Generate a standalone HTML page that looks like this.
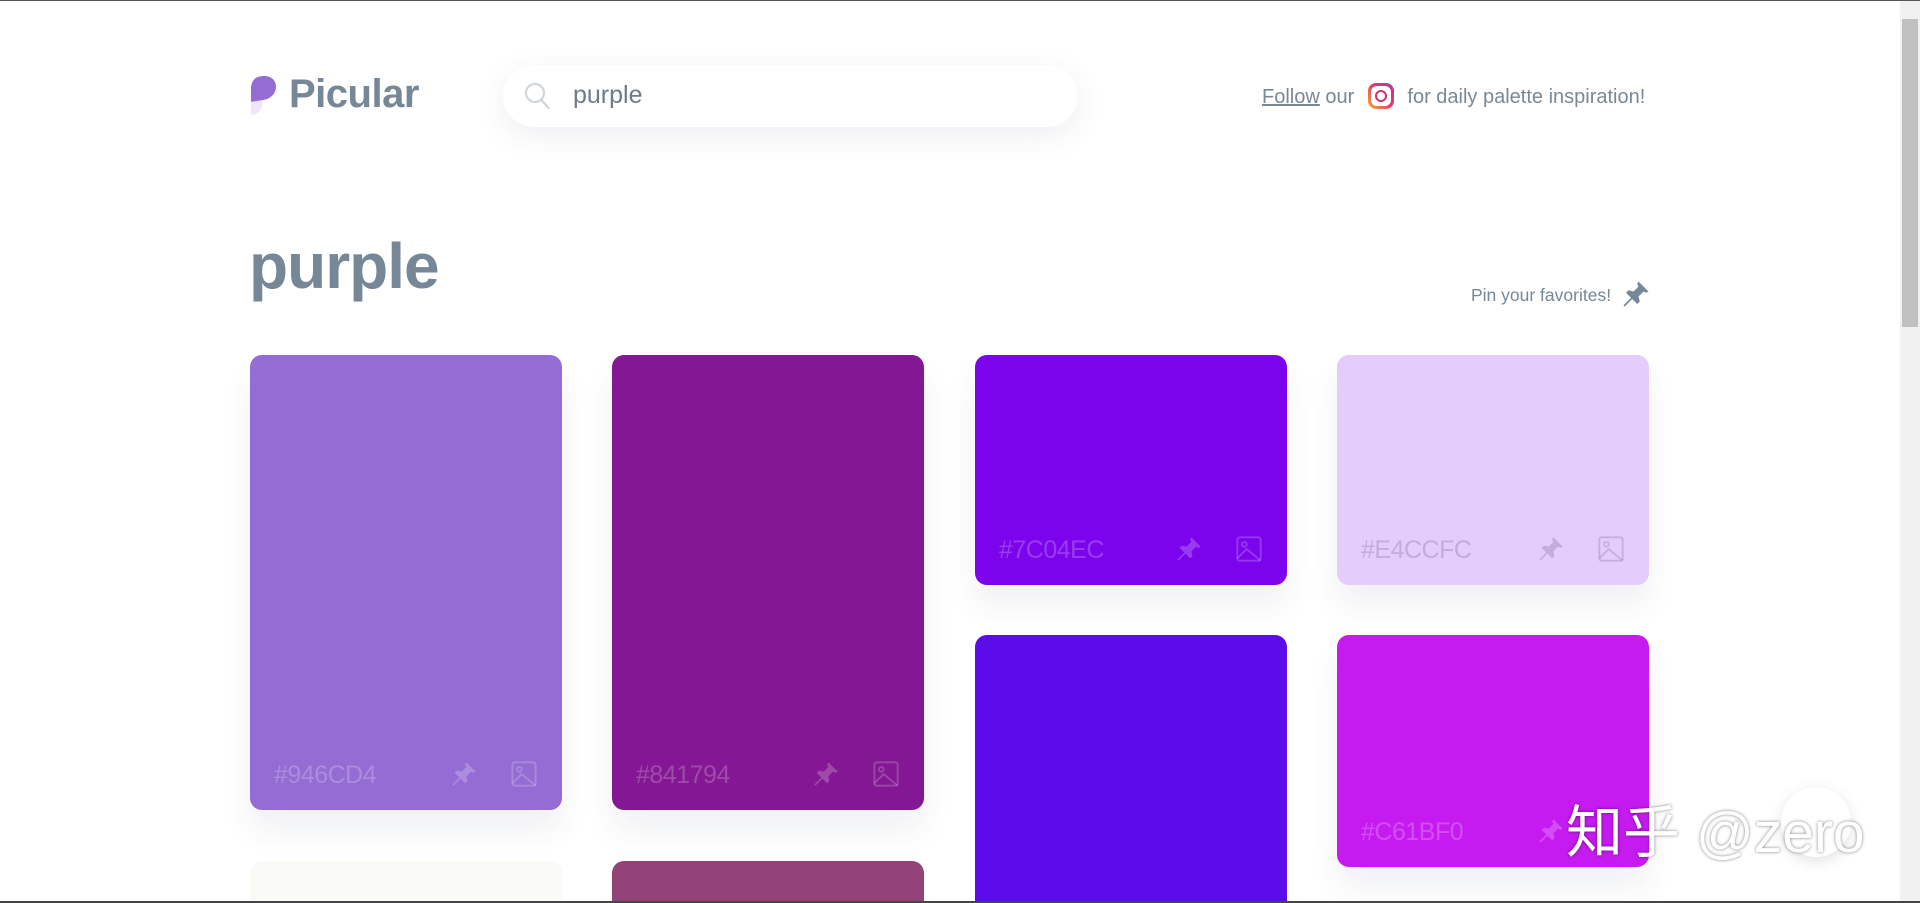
<!DOCTYPE html>
<html style="width:1920px;height:903px;overflow:hidden"><head><meta charset="utf-8"><style>
*{margin:0;padding:0;box-sizing:border-box}
body{width:1920px;height:903px;overflow:hidden;background:#fff;font-family:"Liberation Sans",sans-serif}
#w{position:relative;width:1920px;height:903px;overflow:hidden;border-top:1px solid #555;border-bottom:2px solid #444}
.abs{position:absolute}
.card{position:absolute;border-radius:12px;box-shadow:0 20px 30px rgba(40,50,80,.07)}
.cut{border-radius:12px 12px 0 0;box-shadow:none}
.hex{position:absolute;left:24px;bottom:20px;font-size:25px;color:rgba(255,255,255,.22);letter-spacing:-.5px}
.ic{position:absolute;bottom:22px;width:28px;height:28px}
</style></head><body><div id="w">
<svg class="abs" style="left:249px;top:74px" width="28" height="42" viewBox="0 0 28 42"><path d="M2 14C2 4 8 1 15 1c8 0 12 5 12 11s-5 12-13 13L2 27z" fill="#946CD4"/><path d="M2 27l12-2c0 8-4 15-12 15z" fill="#f0e6fa"/></svg>
<div class="abs" style="left:289px;top:71px;font-size:40px;font-weight:bold;color:#768797;letter-spacing:-.5px">Picular</div>
<div class="abs" style="left:503px;top:64px;width:575px;height:62px;border-radius:31px;background:#fff;box-shadow:0 8px 30px rgba(60,70,100,.09)"></div>
<svg class="abs" style="left:524px;top:81px" width="28" height="30" viewBox="0 0 28 30"><circle cx="11" cy="11" r="9" fill="none" stroke="#cfd4d8" stroke-width="2"/><path d="M17.5 18l7 8" stroke="#cfd4d8" stroke-width="2.2" stroke-linecap="round"/></svg>
<div class="abs" style="left:573px;top:80px;font-size:25px;color:#6d7c89">purple</div>
<div class="abs" style="left:1262px;top:82px;font-size:20px;color:#7a8894;white-space:nowrap"><span style="text-decoration:underline">Follow</span> our <span style="display:inline-block;width:26px;height:26px;vertical-align:-6px;margin:0 8px;border-radius:8px;background:linear-gradient(45deg,#f7b13a,#e4405f 50%,#b52fa8);position:relative"><span style="position:absolute;inset:3px;background:#fff;border-radius:6px"></span><span style="position:absolute;left:7px;top:7px;width:12px;height:12px;border:2.5px solid #d6316c;border-radius:50%"></span></span> for daily palette inspiration!</div>
<div class="abs" style="left:249px;top:228px;font-size:64px;font-weight:bold;color:#768797;letter-spacing:-1px">purple</div>
<div class="abs" style="left:1471px;top:284px;font-size:17.5px;color:#768797">Pin your favorites!</div>
<svg class="abs" style="left:1621px;top:278px" width="30" height="30" viewBox="0 0 24 24"><path d="M14 2l8 8-2 1-2-1-4 4 1 4-2 2-4-4-6 6-1-1 6-6-4-4 2-2 4 1 4-4-1-2z" fill="#768797"/></svg>

<div class="card" style="left:250px;top:354px;width:312px;height:455px;background:#946CD4"><div class="hex">#946CD4</div>
<svg class="ic" style="left:200px" viewBox="0 0 24 24"><path d="M14 2l8 8-2 1-2-1-4 4 1 4-2 2-4-4-6 6-1-1 6-6-4-4 2-2 4 1 4-4-1-2z" fill="rgba(255,255,255,.22)"/></svg>
<svg class="ic" style="left:260px" viewBox="0 0 24 24" fill="none" stroke="rgba(255,255,255,.2)" stroke-width="1.6"><rect x="2" y="2" width="20" height="20" rx="2"/><circle cx="8" cy="8" r="2"/><path d="M2 20l8-8 12 10"/></svg></div>
<div class="card" style="left:612px;top:354px;width:312px;height:455px;background:#841794"><div class="hex">#841794</div>
<svg class="ic" style="left:200px" viewBox="0 0 24 24"><path d="M14 2l8 8-2 1-2-1-4 4 1 4-2 2-4-4-6 6-1-1 6-6-4-4 2-2 4 1 4-4-1-2z" fill="rgba(255,255,255,.22)"/></svg>
<svg class="ic" style="left:260px" viewBox="0 0 24 24" fill="none" stroke="rgba(255,255,255,.2)" stroke-width="1.6"><rect x="2" y="2" width="20" height="20" rx="2"/><circle cx="8" cy="8" r="2"/><path d="M2 20l8-8 12 10"/></svg></div>
<div class="card" style="left:975px;top:354px;width:312px;height:230px;background:#7C04EC"><div class="hex">#7C04EC</div>
<svg class="ic" style="left:200px" viewBox="0 0 24 24"><path d="M14 2l8 8-2 1-2-1-4 4 1 4-2 2-4-4-6 6-1-1 6-6-4-4 2-2 4 1 4-4-1-2z" fill="rgba(255,255,255,.22)"/></svg>
<svg class="ic" style="left:260px" viewBox="0 0 24 24" fill="none" stroke="rgba(255,255,255,.2)" stroke-width="1.6"><rect x="2" y="2" width="20" height="20" rx="2"/><circle cx="8" cy="8" r="2"/><path d="M2 20l8-8 12 10"/></svg></div>
<div class="card" style="left:1337px;top:354px;width:312px;height:230px;background:#E4CCFC"><div class="hex" style="color:rgba(90,80,120,.25)">#E4CCFC</div>
<svg class="ic" style="left:200px" viewBox="0 0 24 24"><path d="M14 2l8 8-2 1-2-1-4 4 1 4-2 2-4-4-6 6-1-1 6-6-4-4 2-2 4 1 4-4-1-2z" fill="rgba(90,80,120,.25)"/></svg>
<svg class="ic" style="left:260px" viewBox="0 0 24 24" fill="none" stroke="rgba(90,80,120,.22)" stroke-width="1.6"><rect x="2" y="2" width="20" height="20" rx="2"/><circle cx="8" cy="8" r="2"/><path d="M2 20l8-8 12 10"/></svg></div>
<div class="card cut" style="left:975px;top:634px;width:312px;height:266px;background:#5B0CE9"></div>
<div class="card" style="left:1337px;top:634px;width:312px;height:232px;background:#C61BF0"><div class="hex">#C61BF0</div>
<svg class="ic" style="left:200px" viewBox="0 0 24 24"><path d="M14 2l8 8-2 1-2-1-4 4 1 4-2 2-4-4-6 6-1-1 6-6-4-4 2-2 4 1 4-4-1-2z" fill="rgba(255,255,255,.22)"/></svg></div>
<div class="card cut" style="left:612px;top:860px;width:312px;height:40px;background:#944378"></div>
<div class="card cut" style="left:250px;top:860px;width:312px;height:40px;background:#fafaf6"></div>
<div class="abs" style="left:1781px;top:786px;width:70px;height:70px;border-radius:50%;background:#fff;box-shadow:0 4px 14px rgba(0,0,0,.12)"></div>
<div class="abs" style="left:1566px;top:786px;font-size:57px;color:#fff;font-family:'Liberation Sans','Noto Sans CJK SC',sans-serif;text-shadow:0 0 3px rgba(0,0,0,.5);white-space:nowrap">知乎 @zero</div>
<div class="abs" style="left:1900px;top:0;width:20px;height:900px;background:#f1f1f1"></div>
<div class="abs" style="left:1902px;top:18px;width:16px;height:308px;background:#c1c1c1"></div>
</div></body></html>
